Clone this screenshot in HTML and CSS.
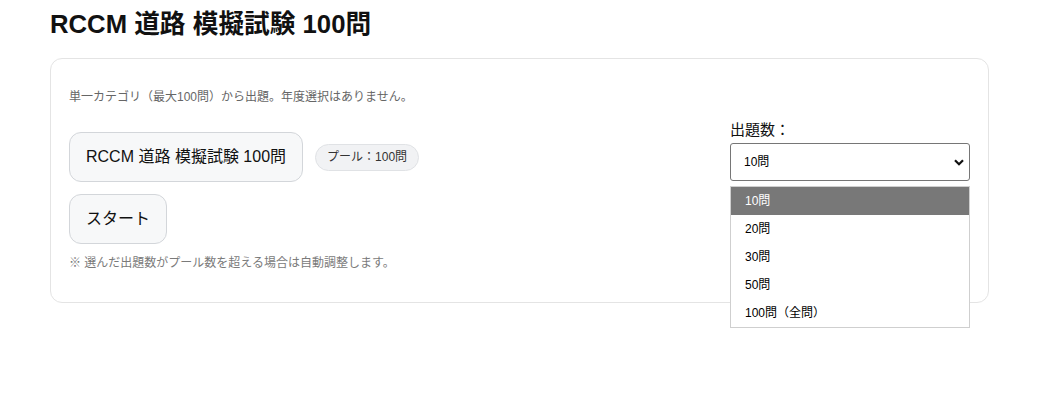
FILE: index.html
```html
<!DOCTYPE html>
<html lang="ja">
<head>
  <meta charset="UTF-8">
  <meta name="viewport" content="width=device-width, initial-scale=1.0">
  <title>RCCM 道路 模擬試験 100問</title>
  <link rel="stylesheet" href="styles.css">
</head>
<body>
  <div class="page">
    <h1>RCCM 道路 模擬試験 100問</h1>
    <div class="card">
      <p class="desc">単一カテゴリ（最大100問）から出題。年度選択はありません。</p>

      <div class="top-row">
        <div class="category">
          <button class="btn">RCCM 道路 模擬試験 100問</button>
          <span class="pill">プール：100問</span>
        </div>
        <div class="count-group">
          <label for="count">出題数：</label>
          <div class="select-wrap">
            <select id="count" class="select">
              <option>10問</option>
              <option>20問</option>
              <option>30問</option>
              <option>50問</option>
              <option>100問（全問）</option>
            </select>
            <svg class="chevron" width="10" height="7" viewBox="0 0 10 7">
              <path d="M1 1.2 L5 5.2 L9 1.2" fill="none" stroke="#111" stroke-width="2.2"/>
            </svg>
            <!-- open list of the select -->
            <ul class="options">
              <li class="active">10問</li>
              <li>20問</li>
              <li>30問</li>
              <li>50問</li>
              <li>100問（全問）</li>
            </ul>
          </div>
        </div>
      </div>

      <button class="btn start">スタート</button>
      <p class="note">※ 選んだ出題数がプール数を超える場合は自動調整します。</p>
    </div>
  </div>
</body>
</html>
```

FILE: styles.css
```css
html, body {
  min-height: 100vh;
}

body {
  margin: 0;
  padding: 0;
  font-family: "Liberation Sans", "Noto Sans CJK JP", sans-serif;
  background-color: #fff;
  color: #111;
}

.page {
  width: 939px;
  padding: 9px 0 0 50px;
}

h1 {
  font-size: 25.7px;
  font-weight: bold;
  line-height: 31px;
  margin: 0 0 18px;
}

.card {
  border: 1px solid #e4e4e4;
  border-radius: 12px;
  padding: 18px 18px 18px;
}

.desc {
  font-size: 12px;
  line-height: 17px;
  color: #666;
  margin: 12px 0 14px;
}

.top-row {
  display: flex;
  justify-content: space-between;
  align-items: flex-end;
}

.category {
  display: flex;
  align-items: center;
  gap: 12px;
}

.btn {
  font-family: inherit;
  font-size: 16px;
  line-height: 22px;
  color: #111;
  background-color: #f7f8f9;
  border: 1px solid #d3d6da;
  border-radius: 12px;
  padding: 13px 16px;
  cursor: pointer;
}

.pill {
  font-size: 12px;
  line-height: 17px;
  color: #333;
  background-color: #f1f2f4;
  border: 1px solid #e0e2e5;
  border-radius: 14px;
  padding: 4px 11px;
}

.count-group {
  width: 240px;
  display: flex;
  flex-direction: column;
  gap: 3px;
  margin-bottom: 1px;
}

.count-group label {
  font-size: 15px;
  line-height: 20px;
}

.select-wrap {
  position: relative;
}

.select {
  appearance: none;
  display: block;
  width: 240px;
  height: 38px;
  font-family: inherit;
  font-size: 12px;
  color: #000;
  background-color: #fff;
  border: 1px solid #767676;
  border-radius: 3px;
  padding: 0 13px;
}

.chevron {
  position: absolute;
  right: 6px;
  top: 16px;
}

.options {
  position: absolute;
  z-index: 5;
  top: 43px;
  left: 0;
  width: 238px;
  list-style: none;
  margin: 0;
  padding: 0;
  background-color: #fff;
  border: 1px solid #cfcfcf;
}

.options li {
  font-size: 12px;
  height: 28px;
  line-height: 28px;
  padding-left: 14px;
  color: #000;
}

.options li.active {
  background-color: #787878;
  color: #fff;
}

.start {
  margin-top: 12px;
}

.note {
  font-size: 12px;
  line-height: 17px;
  color: #7a7a7a;
  margin: 11px 0 12px;
}
```
